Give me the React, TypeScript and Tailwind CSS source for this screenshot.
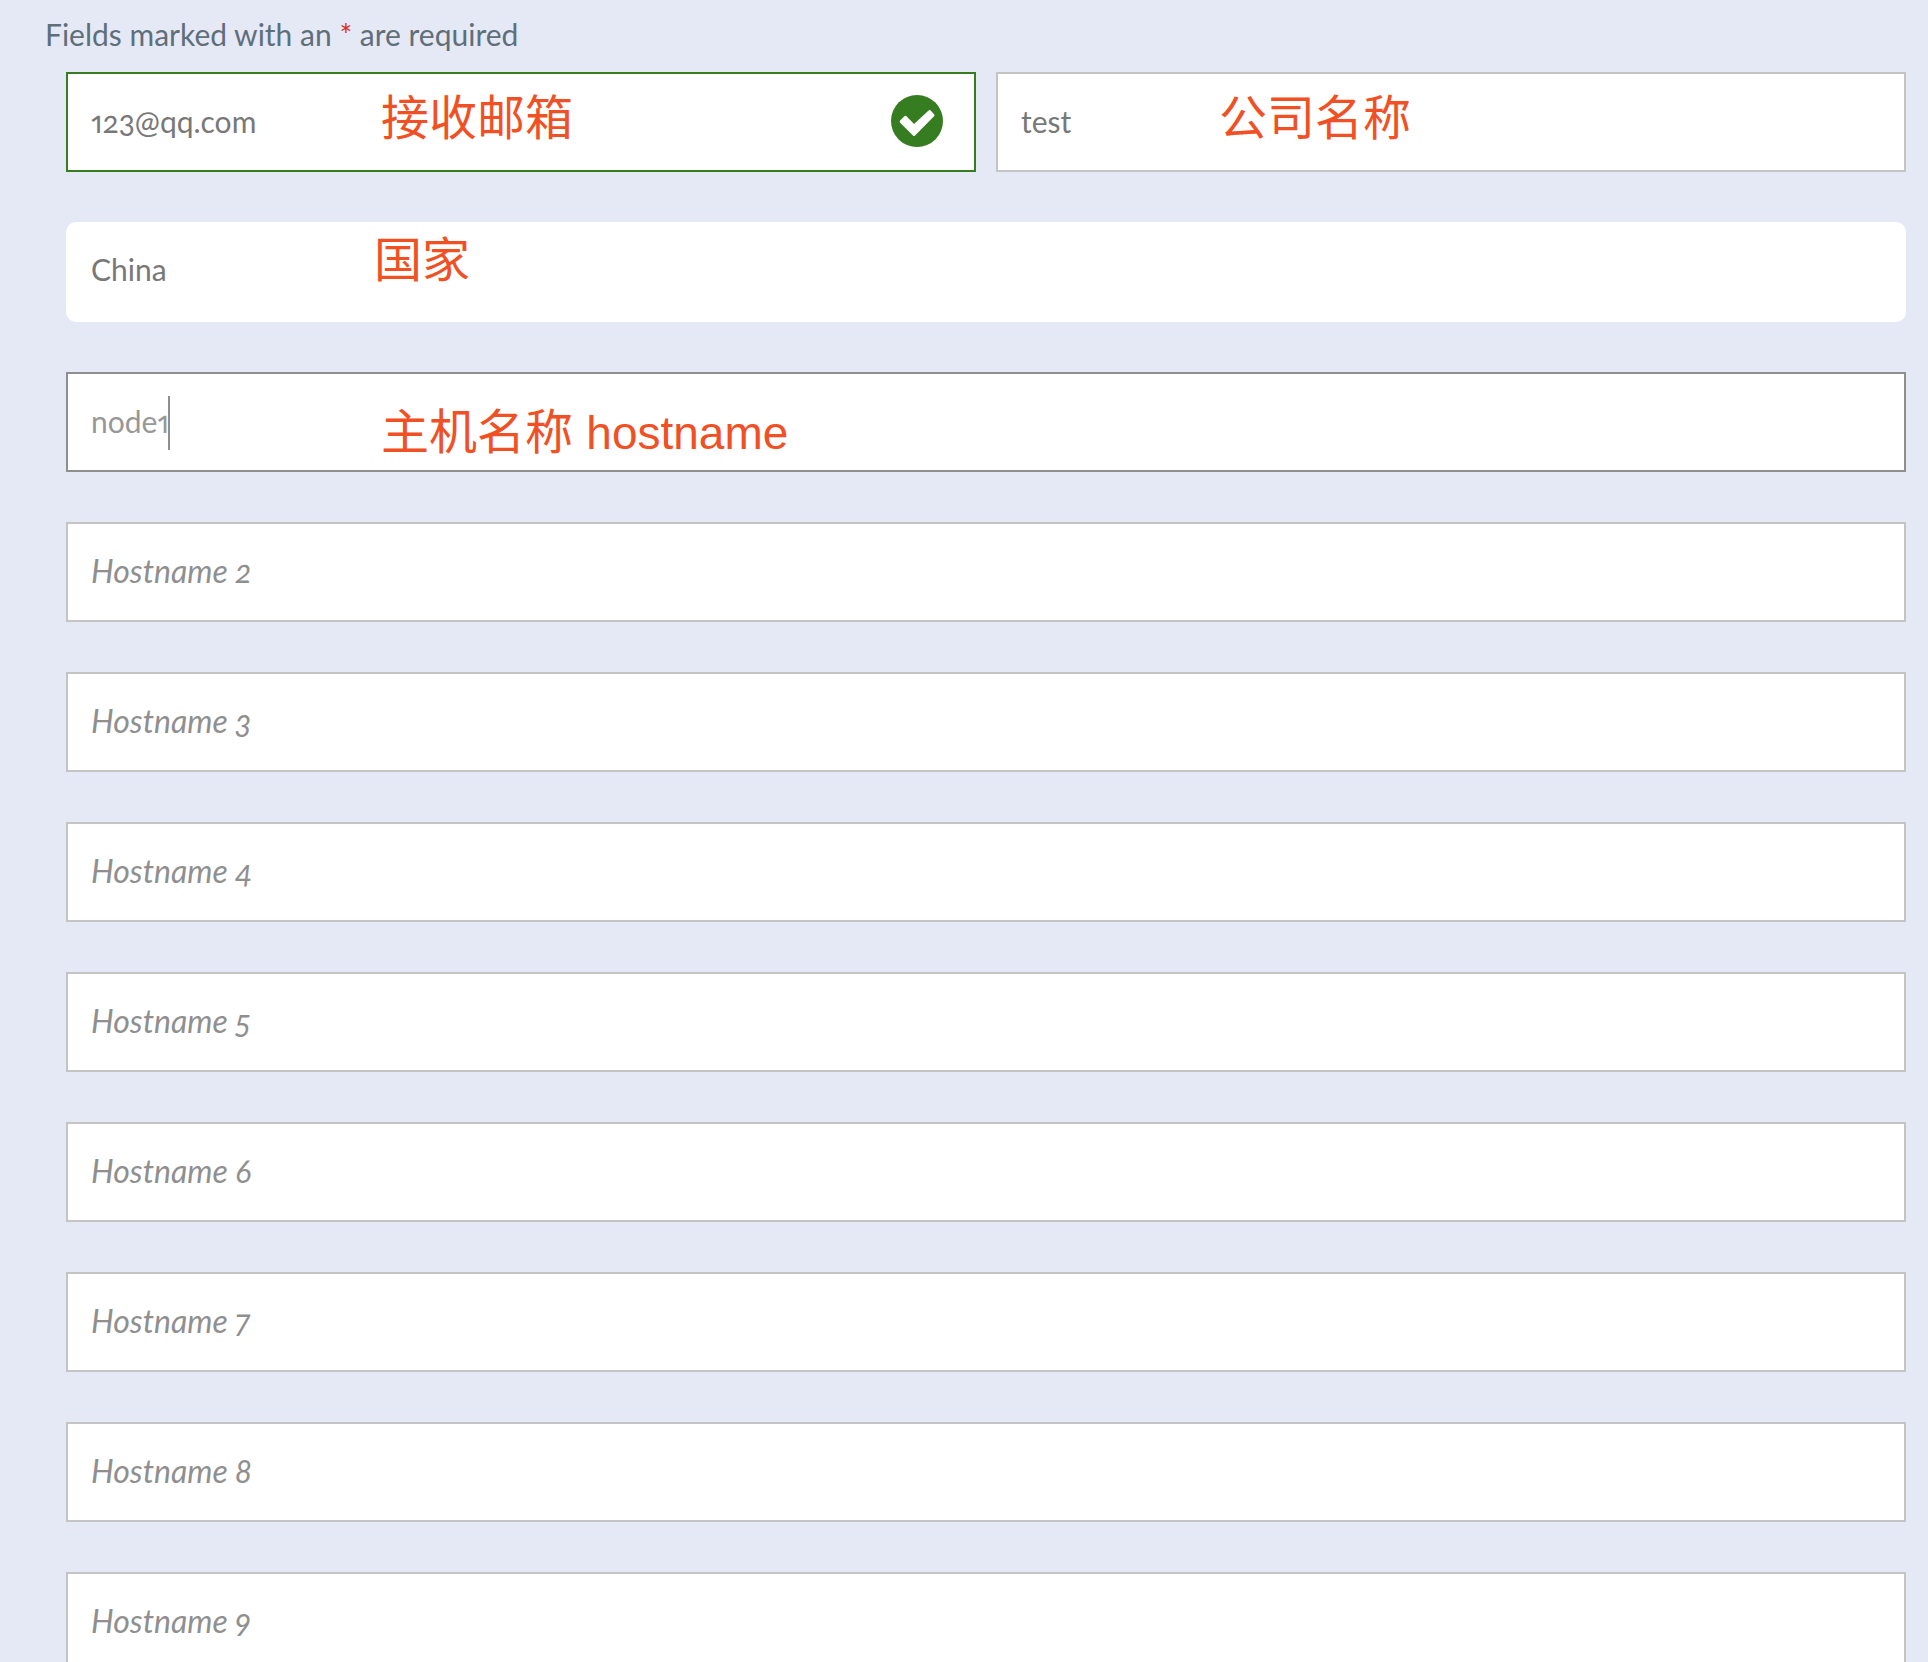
import { useState } from "react";

const fieldClass =
    "block h-[100px] w-full rounded-none border-2 bg-white px-[23px] pb-0.5 text-[30px] leading-10 outline-none placeholder:text-[32px] placeholder:italic placeholder:text-[#8f8f8f] placeholder:opacity-100";

const noteClass =
    "absolute whitespace-nowrap font-['Liberation_Sans','Noto_Sans_CJK_SC',sans-serif] text-[48px] leading-[66px] text-[#f15025]";

const extraHostnames = [2, 3, 4, 5, 6, 7, 8, 9];

function CheckIcon() {
    return (
        <svg
            viewBox="0 0 52 52"
            aria-hidden="true"
            className="absolute right-[33px] top-[23px] size-[52px]"
        >
            <circle cx="26" cy="26" r="26" fill="#367c20" />
            <path
                d="M10.2 26.6 L14.4 22.4 L23 31 L38.6 16.6 L42 20.2 L23 39.4 Z"
                fill="#fff"
                stroke="#fff"
                strokeWidth="3"
                strokeLinejoin="round"
            />
        </svg>
    );
}

export default function App() {
    const [email, setEmail] = useState("123@qq.com");
    const [company, setCompany] = useState("test");
    const [hostname, setHostname] = useState("node1");

    return (
        <main className="min-h-screen overflow-hidden bg-[#e5e9f6] pl-[45px] pr-[22px] font-['Lato','Noto_Sans_CJK_SC',sans-serif] oldstyle-nums proportional-nums">
            <p className="pb-4 pt-3 text-[30px] leading-[44px] text-[#5f6f7a]">
                Fields marked with an <span className="text-[#d9301a]">*</span> are required
            </p>

            <form className="flex flex-col gap-[50px] pl-[21px]">
                <div className="grid grid-cols-2 gap-5">
                    <div className="relative">
                        <input
                            id="email"
                            type="email"
                            value={email}
                            onChange={(e) => setEmail(e.target.value)}
                            className={`${fieldClass} border-[#367c20] text-[#787878]`}
                        />
                        <label htmlFor="email" className={`${noteClass} left-[315px] top-3.5`}>
                            接收邮箱
                        </label>
                        <CheckIcon />
                    </div>
                    <div className="relative">
                        <input
                            id="company"
                            type="text"
                            value={company}
                            onChange={(e) => setCompany(e.target.value)}
                            className={`${fieldClass} border-[#c4c4c4] text-[#787878]`}
                        />
                        <label htmlFor="company" className={`${noteClass} left-[223px] top-3.5`}>
                            公司名称
                        </label>
                    </div>
                </div>

                <div className="relative">
                    <select
                        id="country"
                        defaultValue="China"
                        className="block h-[100px] w-full appearance-none rounded-[10px] bg-white px-[25px] pb-1.5 text-[30px] leading-10 text-[#787878] outline-none"
                    >
                        <option>China</option>
                    </select>
                    <label htmlFor="country" className={`${noteClass} left-[308px] top-1.5`}>
                        国家
                    </label>
                </div>

                <div className="relative">
                    <input
                        id="hostname"
                        type="text"
                        value={hostname}
                        onChange={(e) => setHostname(e.target.value)}
                        className={`${fieldClass} border-[#8f8f8f] text-[#979797]`}
                    />
                    {/* text caret */}
                    <span className="absolute left-[102px] top-6 h-[54px] w-0.5 bg-[#8f8f8f]" />
                    <label htmlFor="hostname" className={`${noteClass} left-[315px] top-7`}>
                        主机名称 <span className="text-[46px]">hostname</span>
                    </label>
                </div>

                {extraHostnames.map((n) => (
                    <input
                        key={n}
                        type="text"
                        aria-label={`Hostname ${n}`}
                        placeholder={`Hostname ${n}`}
                        className={`${fieldClass} border-[#c4c4c4] text-[#787878]`}
                    />
                ))}
            </form>
        </main>
    );
}
